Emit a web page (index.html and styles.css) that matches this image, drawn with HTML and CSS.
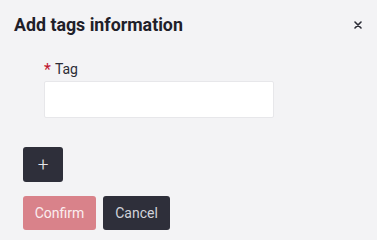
FILE: index.html
```html
<!DOCTYPE html>
<html>
<head>
<meta charset="utf-8">
<link rel="stylesheet" href="styles.css">
</head>
<body>
<div class="dialog">
  <div class="header">
    <h1 class="title">Add tags information</h1>
    <button class="close" aria-label="Close">
      <svg width="8" height="8" viewBox="0 0 8 8"><path d="M1 1L7 7M7 1L1 7" stroke="#2b2c36" stroke-width="1.6" stroke-linecap="round"/></svg>
    </button>
  </div>
  <div class="field">
    <label class="label"><span class="req">*</span>Tag</label>
    <input class="input" type="text">
  </div>
  <button class="add">+</button>
  <div class="footer">
    <button class="btn confirm">Confirm</button>
    <button class="btn cancel">Cancel</button>
  </div>
</div>
</body>
</html>
```
FILE: styles.css
```css
html, body {
  margin: 0;
  padding: 0;
  background: #f3f3f5;
  font-family: Roboto, "Noto Sans", sans-serif;
}
.dialog {
  width: 377px;
  height: 240px;
  box-sizing: border-box;
}
.header {
  display: flex;
  align-items: center;
  justify-content: space-between;
  padding: 12px 15px 0 14px;
  height: 25px;
}
.title {
  margin: 0;
  font-size: 17.8px;
  font-weight: 700;
  color: #1f2029;
  line-height: 25px;
}
.close {
  border: none;
  background: transparent;
  padding: 0;
  width: 8px;
  height: 8px;
  display: flex;
  cursor: pointer;
}
.field {
  margin: 24px 0 0 44px;
  display: flex;
  flex-direction: column;
}
.label {
  font-size: 14px;
  color: #2b2c36;
  line-height: 16px;
  display: flex;
  align-items: center;
}
.req {
  color: #c0172f;
  font-size: 16px;
  margin-right: 4px;
  position: relative;
  top: 1px;
}
.input {
  margin-top: 4px;
  width: 230px;
  height: 37px;
  box-sizing: border-box;
  border: 1px solid #e7e7ea;
  background: #fff;
  border-radius: 2px;
  outline: none;
}
.add {
  display: block;
  margin: 29px 0 0 23px;
  width: 40px;
  height: 35px;
  border: none;
  border-radius: 3px;
  background: #2e2f3a;
  color: #e6e6ea;
  font-family: Roboto, sans-serif;
  font-size: 19px;
  font-weight: 300;
  line-height: 35px;
  padding: 0;
}
.footer {
  display: flex;
  gap: 7px;
  margin: 14px 0 0 23px;
}
.btn {
  height: 34px;
  border: none;
  border-radius: 3px;
  font-family: Roboto, sans-serif;
  font-size: 14px;
  padding: 0;
}
.confirm {
  width: 73px;
  background: #d9828a;
  color: #fbeef0;
}
.cancel {
  width: 67px;
  background: #2e2f3a;
  color: #d2d3da;
}
```
